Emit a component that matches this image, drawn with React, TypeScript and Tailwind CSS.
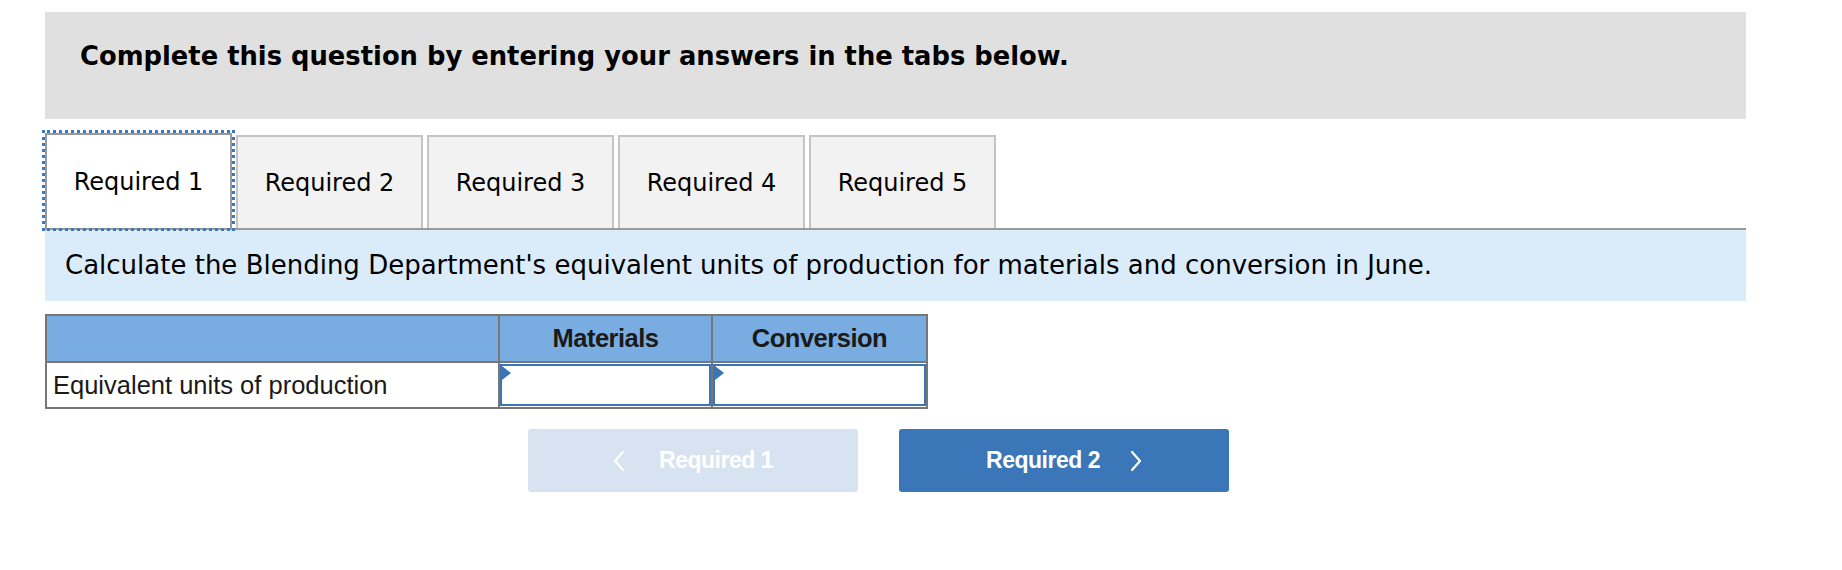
import React from 'react';

const tabs = ['Required 1', 'Required 2', 'Required 3', 'Required 4', 'Required 5'];

function Flag() {
  return (
    <svg className="absolute left-0 top-0" width="9" height="14" viewBox="0 0 9 14">
      <path d="M0 0 L9 7 L0 14 Z" fill="#3a75b8" />
    </svg>
  );
}

function Chevron({ dir }: { dir: 'left' | 'right' }) {
  return (
    <svg width="12" height="22" viewBox="0 0 12 22" fill="none" stroke="white" strokeWidth="2.2" strokeLinecap="round" strokeLinejoin="round">
      {dir === 'left' ? <path d="M10 2 L2 11 L10 20" /> : <path d="M2 2 L10 11 L2 20" />}
    </svg>
  );
}

export default function App() {
  return (
    <div className="w-[1842px] h-[570px] bg-white pl-[45px] pt-[12px]" style={{ fontFamily: '"DejaVu Sans", Verdana, sans-serif' }}>
      <div className="w-[1701px]">
        <div className="h-[107px] bg-[#e0e0e0] pl-[35px] pt-[25px]">
          <h2 className="text-[25.8px] leading-[38px] font-bold text-black">Complete this question by entering your answers in the tabs below.</h2>
        </div>

        <div className="mt-[14px] flex items-end gap-[4px] border-b-2 border-[#9a9a9a]">
          {tabs.map((t, i) => (
            <div
              key={t}
              className={
                i === 0
                  ? 'h-[95px] w-[187px] flex items-center justify-center bg-white border-2 border-b-0 border-[#999] outline-[3px] outline-dotted outline-[#3b78c2] text-[24px] text-black'
                  : 'h-[93px] w-[187px] flex items-center justify-center bg-[#f2f2f2] border-2 border-b-0 border-[#c4c4c4] text-[24px] text-black'
              }
            >
              {t}
            </div>
          ))}
        </div>

        <div className="h-[71px] bg-[#daebf9] flex items-center pl-[20px]">
          <p className="text-[26px] text-black">
            Calculate the Blending Department's equivalent units of production for materials and conversion in June.
          </p>
        </div>

        <table className="mt-[13px] border-collapse border-2 border-[#777]" style={{ fontFamily: '"Liberation Sans", Arial, sans-serif' }}>
          <thead>
            <tr className="bg-[#79ade2] h-[47px]">
              <th className="w-[453px] border-2 border-[#777]"></th>
              <th className="w-[213px] border-2 border-[#777] text-[25.5px] font-bold text-[#1a1a1a] tracking-[-0.5px]">Materials</th>
              <th className="w-[215px] border-2 border-[#777] text-[25.5px] font-bold text-[#1a1a1a] tracking-[-0.5px]">Conversion</th>
            </tr>
          </thead>
          <tbody>
            <tr className="h-[46px]">
              <td className="border-2 border-[#777] pl-[6px] text-[25.5px] text-[#1a1a1a]">Equivalent units of production</td>
              <td className="border-2 border-[#777] p-0">
                <div className="relative h-[42px] border-2 border-[#3a75b8] bg-white">
                  <Flag />
                </div>
              </td>
              <td className="border-2 border-[#777] p-0">
                <div className="relative h-[42px] border-2 border-[#3a75b8] bg-white">
                  <Flag />
                </div>
              </td>
            </tr>
          </tbody>
        </table>

        <div className="mt-[20px] flex gap-[41px] pl-[483px]" style={{ fontFamily: '"Liberation Sans", Arial, sans-serif' }}>
          <button className="h-[63px] w-[330px] rounded-[3px] bg-[#d7e3f1] flex items-center justify-center gap-[34px] text-white text-[23px] font-bold tracking-[-0.5px]">
            <Chevron dir="left" />
            <span>Required 1</span>
          </button>
          <button className="h-[63px] w-[330px] rounded-[3px] bg-[#3a76b8] flex items-center justify-center gap-[30px] text-white text-[23px] font-bold tracking-[-0.5px]">
            <span>Required 2</span>
            <Chevron dir="right" />
          </button>
        </div>
      </div>
    </div>
  );
}
